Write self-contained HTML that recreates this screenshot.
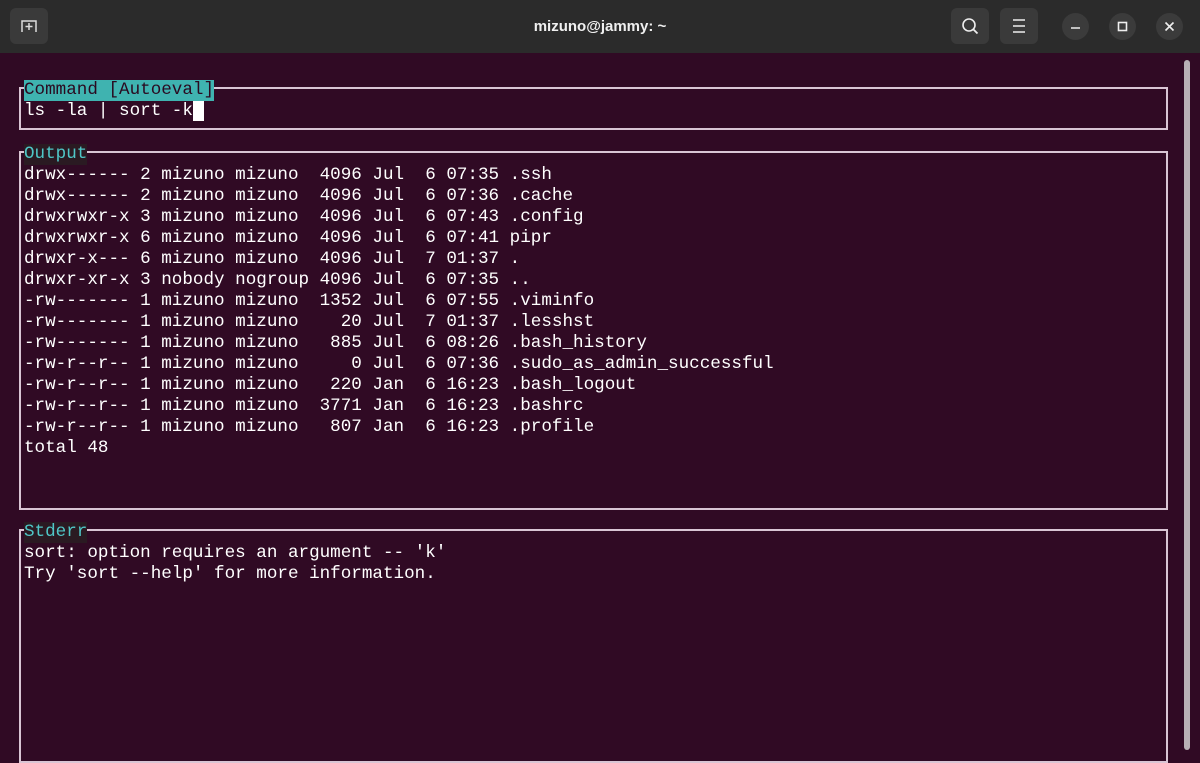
<!DOCTYPE html>
<html><head><style>
html,body{margin:0;width:1200px;height:742px;overflow:hidden;background:#300a24;font-family:"Liberation Mono",monospace;}
.tb{position:absolute;left:0;top:0;width:1200px;height:53px;background:#2b2b2b;}
.btn{position:absolute;top:8px;width:38px;height:36px;border-radius:6px;background:#3a3a3a;}
.cir{position:absolute;top:13px;width:27px;height:27px;border-radius:50%;background:#3b3b3b;}
.title{position:absolute;top:0;left:0;width:1200px;height:53px;text-align:center;color:#f0f0f0;font-family:"Liberation Sans",sans-serif;font-weight:bold;font-size:15px;line-height:53px;}
.box{position:absolute;left:19px;width:1145px;border:2px solid #d9c5d4;}
.t{position:absolute;left:24px;font-size:17.6px;line-height:21px;color:#ffffff;white-space:pre;}
.lab{position:absolute;left:24px;font-size:17.6px;line-height:21px;color:#4fc7c7;background:#2a1a22;white-space:pre;}
.sb{position:absolute;left:1184px;top:60px;width:6px;height:690px;border-radius:3px;background:#b8b0b5;}
</style></head><body>
<div class="tb">
<div class="btn" style="left:10px"><svg width="38" height="36"><path d="M12 24V13h14v11M19 15v7M15.5 18.5h7" stroke="#ddd" stroke-width="1.5" fill="none"/></svg></div>
<div class="title">mizuno@jammy: ~</div>
<div class="btn" style="left:951px"><svg width="38" height="36"><circle cx="18" cy="17" r="6" stroke="#eee" stroke-width="1.6" fill="none"/><path d="M22.5 21.5l4 4" stroke="#eee" stroke-width="1.8"/></svg></div>
<div class="btn" style="left:1000px"><svg width="38" height="36"><path d="M13 12h12M13 18h12M13 24h12" stroke="#eee" stroke-width="1.6"/></svg></div>
<div class="cir" style="left:1062px"><svg width="27" height="27"><path d="M9 15h9" stroke="#eee" stroke-width="1.5"/></svg></div>
<div class="cir" style="left:1109px"><svg width="27" height="27"><rect x="9.5" y="9.5" width="8" height="8" stroke="#eee" stroke-width="1.6" fill="none"/></svg></div>
<div class="cir" style="left:1156px"><svg width="27" height="27"><path d="M9.5 9.5l8 8M17.5 9.5l-8 8" stroke="#eee" stroke-width="1.6"/></svg></div>
</div>
<div class="sb"></div>
<div class="box" style="top:87px;height:39px"></div>
<div class="box" style="top:151px;height:355px"></div>
<div class="box" style="top:529px;height:230px"></div>
<div class="lab" style="top:80px;background:#3fb3b0;color:#2a0a20">Command [Autoeval]</div>
<div class="t" style="top:101px">ls -la | sort -k<span style="background:#fff;color:#300a24"> </span></div>
<div class="lab" style="top:144px">Output</div>
<div class="t" style="top:165px">drwx------ 2 mizuno mizuno  4096 Jul  6 07:35 .ssh
drwx------ 2 mizuno mizuno  4096 Jul  6 07:36 .cache
drwxrwxr-x 3 mizuno mizuno  4096 Jul  6 07:43 .config
drwxrwxr-x 6 mizuno mizuno  4096 Jul  6 07:41 pipr
drwxr-x--- 6 mizuno mizuno  4096 Jul  7 01:37 .
drwxr-xr-x 3 nobody nogroup 4096 Jul  6 07:35 ..
-rw------- 1 mizuno mizuno  1352 Jul  6 07:55 .viminfo
-rw------- 1 mizuno mizuno    20 Jul  7 01:37 .lesshst
-rw------- 1 mizuno mizuno   885 Jul  6 08:26 .bash_history
-rw-r--r-- 1 mizuno mizuno     0 Jul  6 07:36 .sudo_as_admin_successful
-rw-r--r-- 1 mizuno mizuno   220 Jan  6 16:23 .bash_logout
-rw-r--r-- 1 mizuno mizuno  3771 Jan  6 16:23 .bashrc
-rw-r--r-- 1 mizuno mizuno   807 Jan  6 16:23 .profile
total 48</div>
<div class="lab" style="top:522px">Stderr</div>
<div class="t" style="top:543px">sort: option requires an argument -- 'k'
Try 'sort --help' for more information.</div>
</body></html>
